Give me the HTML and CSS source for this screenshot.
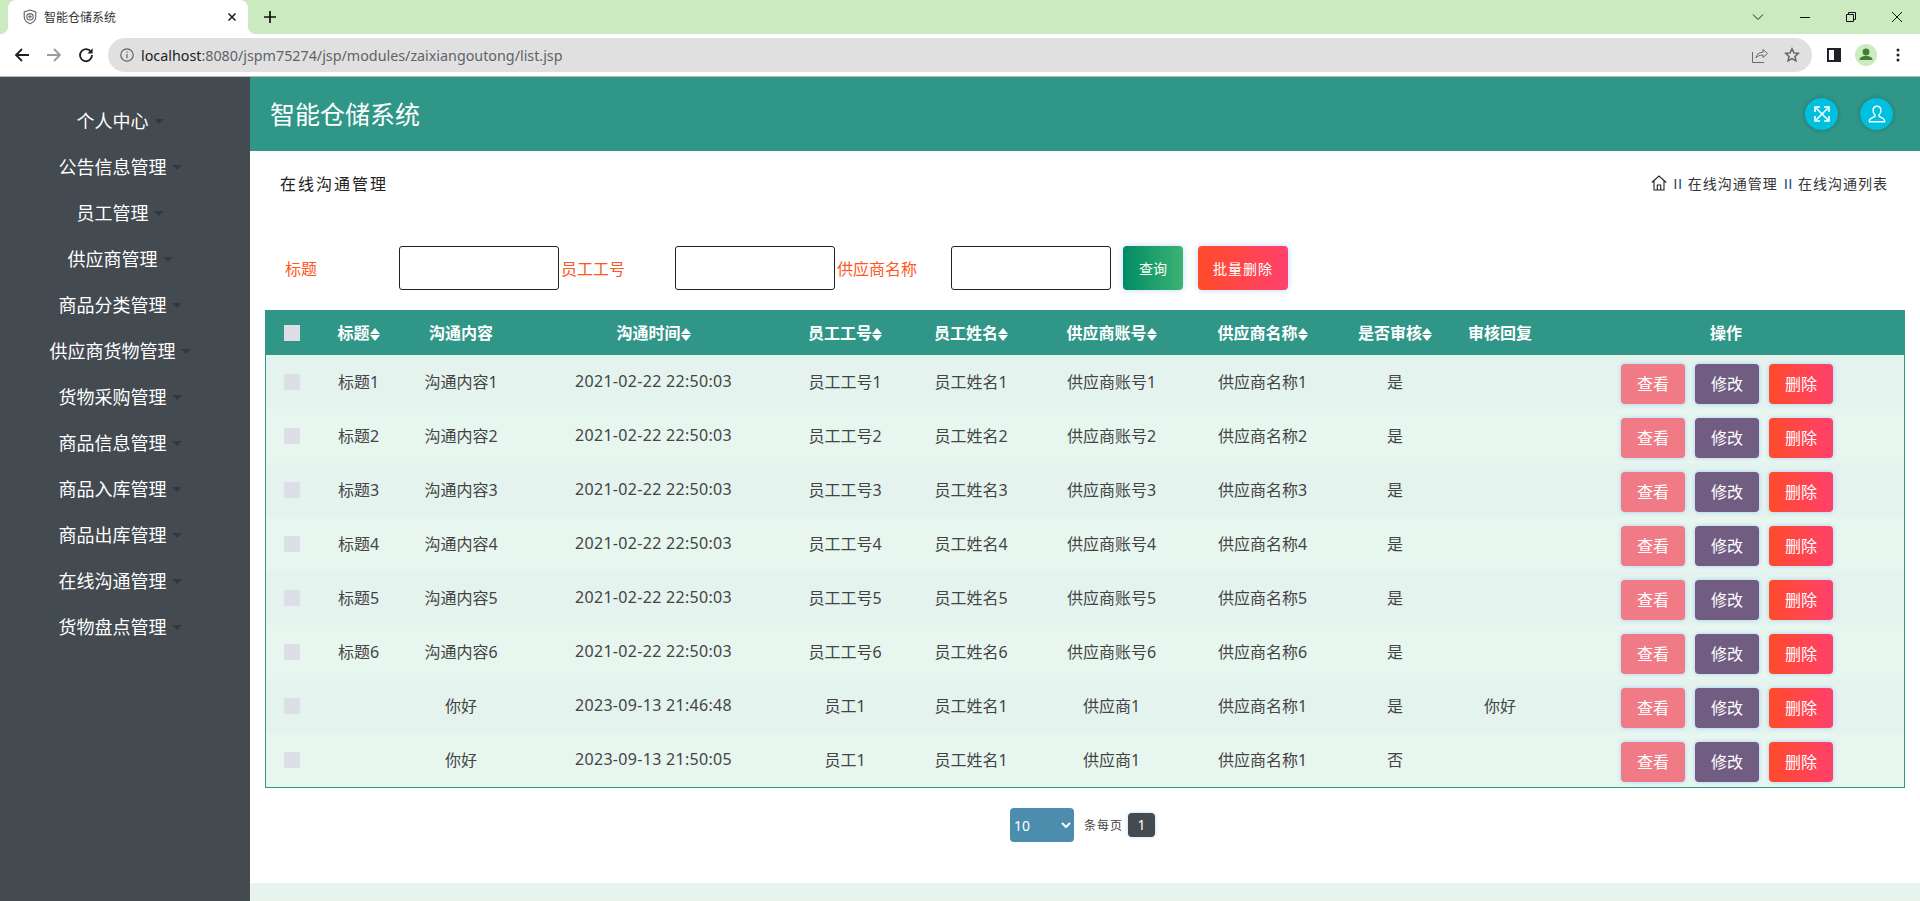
FILE: index.html
```html
<!DOCTYPE html>
<html lang="zh-CN">
<head>
<meta charset="utf-8">
<title>智能仓储系统</title>
<link rel="stylesheet" href="styles.css">
</head>
<body>
<div class="tabstrip">
  <div class="tab">
    <svg class="favicon" viewBox="0 0 16 16" width="16" height="16" fill="none" stroke="#5f6368" stroke-width="1.1"><path d="M8 1l5.8 2v4.6c0 3.4-2.4 5.9-5.8 7.2-3.4-1.3-5.8-3.8-5.8-7.2V3z"/><circle cx="8" cy="7.8" r="3.2"/><path d="M8 6v3.6M6.2 7.8h3.6"/></svg>
    <span class="tab-title">智能仓储系统</span>
    <svg class="tab-close" viewBox="0 0 10 10" width="10" height="10" fill="none" stroke="#222" stroke-width="1.6"><path d="M1.5 1.5l7 7M8.5 1.5l-7 7"/></svg>
  </div>
  <svg class="newtab" viewBox="0 0 12 12" width="12" height="12" fill="none" stroke="#111" stroke-width="1.7"><path d="M6 0v12M0 6h12"/></svg>
  <div class="winctl">
    <svg viewBox="0 0 12 8" width="12" height="8" fill="none" stroke="#222" stroke-width="1"><path d="M1 1.5l5 5 5-5"/></svg>
    <svg viewBox="0 0 10 10" width="10" height="10" fill="none" stroke="#111" stroke-width="1"><path d="M0 5.5h10"/></svg>
    <svg viewBox="0 0 10 10" width="10" height="10" fill="none" stroke="#111" stroke-width="1"><path d="M.5 2.5h7v7h-7zM2.5 2.5v-2h7v7h-2"/></svg>
    <svg viewBox="0 0 10 10" width="10" height="10" fill="none" stroke="#111" stroke-width="1"><path d="M0 0l10 10M10 0L0 10"/></svg>
  </div>
</div>
<div class="toolbar">
  <svg class="nav" viewBox="0 0 16 16" width="16" height="16" fill="none" stroke="#202124" stroke-width="1.8"><path d="M15 8H2M8 2L2 8l6 6"/></svg>
  <svg class="nav" viewBox="0 0 16 16" width="16" height="16" fill="none" stroke="#9b9b9b" stroke-width="1.8"><path d="M1 8h13M8 2l6 6-6 6"/></svg>
  <svg class="nav" viewBox="0 0 16 16" width="16" height="16" fill="none" stroke="#202124" stroke-width="1.8"><path d="M13.2 5.2A6 6 0 1 0 14 8"/><path d="M14.6 1.2v5.2H9.4z" fill="#202124" stroke="none"/></svg>
  <div class="omnibox">
    <svg viewBox="0 0 14 14" width="14" height="14" fill="none" stroke="#5f6368" stroke-width="1.2"><circle cx="7" cy="7" r="6.2"/><path d="M7 6v4.2M7 3.4v1.4"/></svg>
    <span class="url"><span class="host">localhost</span>:8080/jspm75274/jsp/modules/zaixiangoutong/list.jsp</span>
    <svg class="omni-share" viewBox="0 0 16 16" width="16" height="16" fill="none" stroke="#6b6b6b" stroke-width="1"><path d="M.5 5v10.5h11.5M4 11c.4-3.6 3-5.8 7-5.8V2.5l4.5 4-4.5 4V8C7.800 8 5.500 9 4 11z"/></svg>
    <svg class="omni-star" viewBox="0 0 16 16" width="16" height="16" fill="none" stroke="#5f6368" stroke-width="1.5"><path d="M8 1.800l1.900 4.100 4.400.5-3.300 3 .9 4.400L8 11.600l-3.900 2.200.9-4.400-3.300-3 4.400-.5z"/></svg>
  </div>
  <span class="panel-ico"></span>
  <svg class="avatar" viewBox="0 0 22 22" width="22" height="22"><circle cx="11" cy="11" r="11" fill="#cdeac0"/><circle cx="11" cy="8" r="3.4" fill="#3f7f2f"/><path d="M4.500 16c0-2.600 3-3.900 6.500-3.900s6.500 1.300 6.500 3.900z" fill="#3f7f2f"/></svg>
  <svg class="kebab" viewBox="0 0 4 14" width="4" height="14" fill="#222"><circle cx="2" cy="2" r="1.5"/><circle cx="2" cy="7" r="1.5"/><circle cx="2" cy="12" r="1.500"/></svg>
</div>
<div class="app">
  <nav class="sidebar">
    <a class="menu-item">个人中心<i class="caret"></i></a>
    <a class="menu-item">公告信息管理<i class="caret"></i></a>
    <a class="menu-item">员工管理<i class="caret"></i></a>
    <a class="menu-item">供应商管理<i class="caret"></i></a>
    <a class="menu-item">商品分类管理<i class="caret"></i></a>
    <a class="menu-item">供应商货物管理<i class="caret"></i></a>
    <a class="menu-item">货物采购管理<i class="caret"></i></a>
    <a class="menu-item">商品信息管理<i class="caret"></i></a>
    <a class="menu-item">商品入库管理<i class="caret"></i></a>
    <a class="menu-item">商品出库管理<i class="caret"></i></a>
    <a class="menu-item">在线沟通管理<i class="caret"></i></a>
    <a class="menu-item">货物盘点管理<i class="caret"></i></a>
  </nav>
  <main class="main">
    <header class="topbar">
      <h1 class="brand">智能仓储系统</h1>
      <div class="round-btns">
        <span class="round-btn"><svg viewBox="0 0 16 16" width="16" height="16" fill="none" stroke="#fff" stroke-width="1.500"><path d="M2 2l12 12M14 2L2 14"/><path d="M1 6V1h5M10 1h5v5M15 10v5h-5M6 15H1v-5" stroke-width="1.600"/></svg></span>
        <span class="round-btn"><svg viewBox="0 0 18 18" width="18" height="18" fill="none" stroke="#fff" stroke-width="1.400"><path d="M9 1.200c-2.500 0-3.900 1.900-3.900 4.300 0 1.900.8 3.500 1.900 4.500v1.300c0 .7-5.600 1.800-5.600 4.500v1h15.200v-1c0-2.700-5.600-3.800-5.600-4.500V10c1.100-1 1.900-2.600 1.900-4.500 0-2.400-1.400-4.300-3.900-4.300z"/></svg></span>
      </div>
    </header>
    <section class="content">
      <div class="crumbs">
        <span class="page-title">在线沟通管理</span>
        <div class="breadcrumb">
          <svg viewBox="0 0 16 16" width="16" height="16" fill="none" stroke="#222" stroke-width="1.100"><path d="M.8 7.500L8 1l7.200 6.500M3 6v9h10V6M6.300 15v-5h3.400v5"/></svg>
          <span class="sep">II</span><span>在线沟通管理</span><span class="sep">II</span><span>在线沟通列表</span>
        </div>
      </div>
      <form class="search">
        <label class="field"><span class="field-label">标题</span><input class="field-input" type="text"></label>
        <label class="field"><span class="field-label">员工工号</span><input class="field-input" type="text"></label>
        <label class="field"><span class="field-label">供应商名称</span><input class="field-input" type="text"></label>
        <button class="btn-query" type="button">查询</button>
        <button class="btn-batch" type="button">批量删除</button>
      </form>
      <div class="table-wrap">
      <table class="grid">
        <colgroup><col class="c1"><col class="c2"><col class="c3"><col class="c4"><col class="c5"><col class="c6"><col class="c7"><col class="c8"><col class="c9"><col class="c10"><col class="c11"></colgroup>
        <thead><tr>
          <th><span class="check head"></span></th>
          <th>标题<i class="sort"></i></th>
          <th>沟通内容</th>
          <th>沟通时间<i class="sort"></i></th>
          <th>员工工号<i class="sort"></i></th>
          <th>员工姓名<i class="sort"></i></th>
          <th>供应商账号<i class="sort"></i></th>
          <th>供应商名称<i class="sort"></i></th>
          <th>是否审核<i class="sort"></i></th>
          <th>审核回复</th>
          <th>操作</th>
        </tr></thead>
        <tbody>
          <tr><td><span class="check"></span></td><td>标题1</td><td>沟通内容1</td><td class="time">2021-02-22 22:50:03</td><td>员工工号1</td><td>员工姓名1</td><td>供应商账号1</td><td>供应商名称1</td><td>是</td><td></td><td class="ops"><div class="ops-in"><button class="op view">查看</button><button class="op edit">修改</button><button class="op del">删除</button></div></td></tr>
          <tr><td><span class="check"></span></td><td>标题2</td><td>沟通内容2</td><td class="time">2021-02-22 22:50:03</td><td>员工工号2</td><td>员工姓名2</td><td>供应商账号2</td><td>供应商名称2</td><td>是</td><td></td><td class="ops"><div class="ops-in"><button class="op view">查看</button><button class="op edit">修改</button><button class="op del">删除</button></div></td></tr>
          <tr><td><span class="check"></span></td><td>标题3</td><td>沟通内容3</td><td class="time">2021-02-22 22:50:03</td><td>员工工号3</td><td>员工姓名3</td><td>供应商账号3</td><td>供应商名称3</td><td>是</td><td></td><td class="ops"><div class="ops-in"><button class="op view">查看</button><button class="op edit">修改</button><button class="op del">删除</button></div></td></tr>
          <tr><td><span class="check"></span></td><td>标题4</td><td>沟通内容4</td><td class="time">2021-02-22 22:50:03</td><td>员工工号4</td><td>员工姓名4</td><td>供应商账号4</td><td>供应商名称4</td><td>是</td><td></td><td class="ops"><div class="ops-in"><button class="op view">查看</button><button class="op edit">修改</button><button class="op del">删除</button></div></td></tr>
          <tr><td><span class="check"></span></td><td>标题5</td><td>沟通内容5</td><td class="time">2021-02-22 22:50:03</td><td>员工工号5</td><td>员工姓名5</td><td>供应商账号5</td><td>供应商名称5</td><td>是</td><td></td><td class="ops"><div class="ops-in"><button class="op view">查看</button><button class="op edit">修改</button><button class="op del">删除</button></div></td></tr>
          <tr><td><span class="check"></span></td><td>标题6</td><td>沟通内容6</td><td class="time">2021-02-22 22:50:03</td><td>员工工号6</td><td>员工姓名6</td><td>供应商账号6</td><td>供应商名称6</td><td>是</td><td></td><td class="ops"><div class="ops-in"><button class="op view">查看</button><button class="op edit">修改</button><button class="op del">删除</button></div></td></tr>
          <tr><td><span class="check"></span></td><td></td><td>你好</td><td class="time">2023-09-13 21:46:48</td><td>员工1</td><td>员工姓名1</td><td>供应商1</td><td>供应商名称1</td><td>是</td><td>你好</td><td class="ops"><div class="ops-in"><button class="op view">查看</button><button class="op edit">修改</button><button class="op del">删除</button></div></td></tr>
          <tr><td><span class="check"></span></td><td></td><td>你好</td><td class="time">2023-09-13 21:50:05</td><td>员工1</td><td>员工姓名1</td><td>供应商1</td><td>供应商名称1</td><td>否</td><td></td><td class="ops"><div class="ops-in"><button class="op view">查看</button><button class="op edit">修改</button><button class="op del">删除</button></div></td></tr>
        </tbody>
      </table>
      </div>
      <div class="pager">
        <select class="page-size"><option>10</option><option>20</option><option>50</option></select>
        <span class="per-page">条每页</span>
        <span class="page-num">1</span>
      </div>
    </section>
    <div class="foot-band"></div>
  </main>
</div>
</body>
</html>
```
FILE: styles.css
```css
* { box-sizing: border-box; }
html, body { margin: 0; height: 100%; overflow: hidden; }
body {
  display: flex;
  flex-direction: column;
  font-family: "Noto Sans", "Noto Sans CJK SC", sans-serif;
  background: #fff;
  color: #333;
}

/* browser chrome */
.tabstrip {
  height: 34px;
  flex: none;
  display: flex;
  align-items: center;
  background: #cceabf;
  padding-left: 8px;
}
.tab {
  position: relative;
  align-self: flex-end;
  width: 240px;
  height: 34px;
  background: #fff;
  border-radius: 8px 8px 0 0;
  display: flex;
  align-items: center;
  padding-left: 14px;
}
.tab::before, .tab::after {
  content: "";
  position: absolute;
  bottom: 0;
  width: 8px;
  height: 8px;
}
.tab::before { left: -8px; background: radial-gradient(circle at 0 0, #cceabf 8px, #fff 8.5px); }
.tab::after { right: -8px; background: radial-gradient(circle at 100% 0, #cceabf 8px, #fff 8.5px); }
.tab-title { margin-left: 6px; font-size: 12px; color: #333; flex: 1; }
.tab-close { margin-right: 11px; }
.newtab { margin-left: 16px; }
.winctl {
  margin-left: auto;
  display: flex;
  align-items: center;
  gap: 36px;
  padding-right: 18px;
}
.toolbar {
  height: 43px;
  flex: none;
  display: flex;
  align-items: center;
  background: #fff;
  border-bottom: 1px solid #b9b9b9;
  padding: 0 20px 0 14px;
}
.nav { margin-right: 16px; }
.nav + .nav + .nav + .omnibox { margin-left: -2px; }
.omnibox {
  width: 1704px;
  height: 34px;
  border-radius: 17px;
  background: #e0e0e0;
  display: flex;
  align-items: center;
  padding: 0 12px 0 12px;
}
.url {
  margin-left: 7px;
  font-size: 14.3px;
  color: #5f6368;
  flex: 1;
  white-space: nowrap;
}
.host { color: #222; }
.omni-share { margin-right: 16px; }
.panel-ico {
  margin-left: 15px;
  width: 14px;
  height: 14px;
  border: 2px solid #202124;
  border-right-width: 7px;
  background: #fff;
}
.avatar { margin-left: 14px; }
.kebab { margin-left: 19px; }

/* app layout */
.app { flex: 1; min-height: 0; display: flex; }
.sidebar {
  width: 250px;
  flex: none;
  background: #434a50;
  padding-top: 21px;
  display: flex;
  flex-direction: column;
}
.menu-item {
  height: 46px;
  line-height: 46px;
  text-align: center;
  color: #fff;
  font-size: 18px;
}
.caret {
  display: inline-block;
  width: 0;
  height: 0;
  margin: 0 10px 0 5px;
  border-top: 5px solid #33383c;
  border-left: 5px solid transparent;
  border-right: 5px solid transparent;
  vertical-align: 4px;
}
.main { flex: 1; min-width: 0; display: flex; flex-direction: column; }
.topbar {
  height: 74px;
  flex: none;
  background: #309687;
  display: flex;
  align-items: center;
  justify-content: space-between;
  padding: 0 27px 2px 20px;
}
.brand { margin: 0; font-size: 25px; font-weight: 400; color: #fff; }
.round-btns { display: flex; gap: 22px; margin-top: 2px; }
.round-btn {
  width: 33px;
  height: 32px;
  border-radius: 50%;
  background: #00c0e0;
  box-shadow: 0 0 4px rgba(0, 0, 0, .25);
  display: flex;
  align-items: center;
  justify-content: center;
}
.content { flex: 1; padding: 0 15px; background: #fff; }
.crumbs {
  height: 66px;
  display: flex;
  align-items: center;
  justify-content: space-between;
  padding: 0 17px 2px 15px;
}
.page-title { font-size: 16px; letter-spacing: 2px; color: #222; }
.breadcrumb {
  display: flex;
  align-items: center;
  font-size: 14px;
  letter-spacing: 1px;
  color: #333;
}
.sep {
  margin: 0 5px 0 6px;
  font-family: "Liberation Sans", sans-serif;
  font-size: 15px;
  letter-spacing: .5px;
  color: #2a5078;
}

/* search */
.search {
  margin-top: 29px;
  height: 44px;
  display: flex;
  align-items: flex-start;
  padding-left: 20px;
}
.field { display: flex; align-items: center; margin-right: 2px; }
.field-label {
  width: 114px;
  font-size: 16px;
  color: #ff5722;
  white-space: nowrap;
}
.field-input {
  width: 160px;
  height: 44px;
  margin: 0;
  border: 1px solid #222;
  border-radius: 3px;
  background: #fff;
}
.btn-query, .btn-batch {
  height: 44px;
  border: 0;
  border-radius: 4px;
  color: #fff;
  font-family: inherit;
  font-size: 14px;
  box-shadow: 0 0 6px rgba(90, 160, 255, .4);
}
.btn-query {
  margin-left: 10px;
  width: 60px;
  background: linear-gradient(90deg, #018b64, #3cb371);
}
.btn-batch {
  margin-left: 15px;
  width: 90px;
  letter-spacing: 1px;
  background: linear-gradient(90deg, #ff4b2b, #ff416c);
}

/* table */
.table-wrap { margin-top: 20px; border: 1px solid #309687; border-top: 0; }
.grid {
  width: 100%;
  table-layout: fixed;
  border-collapse: collapse;
  font-size: 16px;
}
.c1 { width: 52px; }
.c2 { width: 81px; }
.c3 { width: 124px; }
.c4 { width: 261px; }
.c5 { width: 122px; }
.c6 { width: 130px; }
.c7 { width: 151px; }
.c8 { width: 151px; }
.c9 { width: 114px; }
.c10 { width: 96px; }
.grid th {
  height: 45px;
  padding: 0 0 2px;
  background: #309687;
  color: #fff;
  font-weight: 700;
  text-align: center;
  white-space: nowrap;
}
.grid td {
  height: 54px;
  padding: 0 0 2px;
  text-align: center;
  color: #444;
  white-space: nowrap;
}
.grid tbody tr:nth-child(odd) td { background: #e4f3ee; }
.grid tbody tr:nth-child(even) td { background: #e8f6f0; }
.time { letter-spacing: .3px; }
.check {
  display: block;
  width: 16px;
  height: 16px;
  margin: 2px 0 0 18px;
  background: #dcdfe6;
}
.sort {
  display: inline-block;
  position: relative;
  width: 10px;
  height: 13px;
  vertical-align: -2px;
}
.sort::before, .sort::after {
  content: "";
  position: absolute;
  left: 0;
  border-left: 5px solid transparent;
  border-right: 5px solid transparent;
}
.sort::before { top: 0; border-bottom: 6px solid #fff; }
.sort::after { bottom: 0; border-top: 6px solid #fff; }
.grid td.ops { padding: 4px 0 0 2px; }
.ops-in { display: flex; justify-content: center; gap: 10px; }
.op {
  width: 64px;
  height: 40px;
  padding: 0 0 2px;
  border: 0;
  border-radius: 4px;
  color: #fff;
  font-family: inherit;
  font-size: 16px;
  box-shadow: 0 0 4px rgba(90, 160, 255, .45);
}
.view { background: #f07a86; }
.edit { background: #725d82; }
.del { background: linear-gradient(90deg, #ff4b2b, #ff416c); }

/* pager */
.pager {
  margin-top: 20px;
  padding-right: 5px;
  display: flex;
  align-items: center;
  justify-content: center;
}
.page-size {
  width: 64px;
  height: 34px;
  padding: 0;
  border: 0;
  border-radius: 4px;
  background: #4c8dae;
  color: #fff;
  font-family: inherit;
  font-size: 14px;
}
.per-page { margin-left: 10px; font-size: 12px; letter-spacing: 1px; color: #444; }
.page-num {
  margin-left: 5px;
  width: 27px;
  height: 24px;
  line-height: 24px;
  text-align: center;
  border-radius: 4px;
  background: #434a50;
  color: #fff;
  font-size: 14px;
  box-shadow: 0 0 4px rgba(90, 160, 255, .4);
}
.foot-band { height: 18px; flex: none; background: #e6f4ed; }
```
